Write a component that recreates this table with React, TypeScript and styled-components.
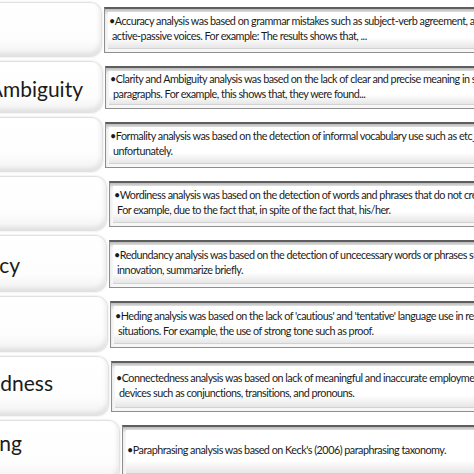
import React from "react"
import styled, { createGlobalStyle } from "styled-components"

interface RowData {
  label: string
  labelPad: number
  labelShift: number
  split: number
  height: number
  lines: string[]
}

const rows: RowData[] = [
  {
    label: "Accuracy",
    labelPad: 112,
    labelShift: 0,
    split: 101,
    height: 53,
    lines: [
      "•Accuracy analysis was based on grammar mistakes such as subject-verb agreement, and",
      "active-passive voices. For example: The results shows that, ...",
    ],
  },
  {
    label: "Clarity and Ambiguity",
    labelPad: 19,
    labelShift: 0,
    split: 102,
    height: 50,
    lines: [
      "•Clarity and Ambiguity analysis was based on the lack of clear and precise meaning in sentences",
      "paragraphs. For example, this shows that, they were found...",
    ],
  },
  {
    label: "Formality",
    labelPad: 112,
    labelShift: 0,
    split: 102,
    height: 53,
    lines: [
      "•Formality analysis was based on the detection of informal vocabulary use such as etc_",
      "unfortunately.",
    ],
  },
  {
    label: "Wordiness",
    labelPad: 116,
    labelShift: 0,
    split: 106,
    height: 53,
    lines: [
      "•Wordiness analysis was based on the detection of words and phrases that do not create",
      "For example, due to the fact that, in spite of the fact that, his/her.",
    ],
  },
  {
    label: "Redundancy",
    labelPad: 86,
    labelShift: 0,
    split: 106,
    height: 55,
    lines: [
      "•Redundancy analysis was based on the detection of uncecessary words or phrases such",
      "innovation, summarize briefly.",
    ],
  },
  {
    label: "Hedging",
    labelPad: 118,
    labelShift: 0,
    split: 107,
    height: 54,
    lines: [
      "•Heding analysis was based on the lack of 'cautious' and 'tentative' language use in real",
      "situations. For example, the use of strong tone such as proof.",
    ],
  },
  {
    label: "Connectedness",
    labelPad: 55,
    labelShift: -5,
    split: 108,
    height: 58,
    lines: [
      "•Connectedness analysis was based on lack of meaningful and inaccurate employment",
      "devices such as conjunctions, transitions,  and pronouns.",
    ],
  },
  {
    label: "Paraphrasing",
    labelPad: 97,
    labelShift: -10,
    split: 119,
    height: 60,
    lines: ["•Paraphrasing analysis was based on Keck's (2006) paraphrasing taxonomy."],
  },
]

export default function App() {
  return (
    <>
      <GlobalStyle />
      <Page>
        <List>
          {rows.map((row) => (
            <Row key={row.label} $height={row.height}>
              <LabelBox $split={row.split} $pad={row.labelPad}>
                <Label $shift={row.labelShift}>{row.label}</Label>
              </LabelBox>
              <Panel>
                <PanelInner>
                  {row.lines.map((line, i) => (
                    <Line key={i} $indent={i > 0}>
                      {line}
                    </Line>
                  ))}
                </PanelInner>
              </Panel>
            </Row>
          ))}
        </List>
      </Page>
    </>
  )
}

const GlobalStyle = createGlobalStyle`
  html, body {
    margin: 0;
    padding: 0;
    background: #ffffff;
  }
`

const Page = styled.div`
  width: 474px;
  height: 474px;
  overflow: hidden;
  background: #ffffff;
  font-family: Lato, "Liberation Sans", sans-serif;
`

const List = styled.div`
  display: flex;
  flex-direction: column;
  gap: 6px;
  padding-top: 3px;
`

const Row = styled.div<{ $height: number }>`
  display: flex;
  align-items: center;
  gap: 3px;
  height: ${(p) => p.$height}px;
  flex-shrink: 0;
`

const LabelBox = styled.div<{ $split: number; $pad: number }>`
  align-self: stretch;
  flex-shrink: 0;
  margin-left: -200px;
  width: ${(p) => p.$split + 200}px;
  display: flex;
  align-items: center;
  justify-content: flex-end;
  padding-right: ${(p) => p.$pad}px;
  box-sizing: border-box;
  border-radius: 11px;
  background: linear-gradient(to bottom, #ffffff 0%, #fdfdfd 70%, #f1f1f1 100%);
  box-shadow: 0 0 2px 1px rgba(0, 0, 0, 0.16), inset -2px -3px 4px rgba(0, 0, 0, 0.07);
`

const Label = styled.span<{ $shift: number }>`
  font-size: 21px;
  color: #1a1a1a;
  white-space: nowrap;
  padding-top: 2px;
  transform: translateY(${(p) => p.$shift}px);
`

const Panel = styled.div`
  flex-shrink: 0;
  width: 560px;
  height: calc(100% - 7px);
  box-sizing: border-box;
  display: flex;
  border: 1px solid #8e8e8e;
  border-top: 2px solid #5e5e5e;
  background: #f7f7f7;
  box-shadow: inset 0 4px 4px -2px rgba(0, 0, 0, 0.3);
  padding: 3px 0 3px 3px;
`

const PanelInner = styled.div`
  flex: 1;
  display: flex;
  flex-direction: column;
  justify-content: center;
  padding: 0 0 3px 1px;
  background: linear-gradient(to bottom, #ffffff 0%, #ffffff 72%, #e6e6e6 100%);
  border-bottom: 1px solid #d2d2d2;
`

const Line = styled.div<{ $indent: boolean }>`
  font-size: 10.8px;
  line-height: 15px;
  letter-spacing: -0.5px;
  color: #1c1c1c;
  white-space: nowrap;
  padding-left: ${(p) => (p.$indent ? 3 : 0)}px;
`
